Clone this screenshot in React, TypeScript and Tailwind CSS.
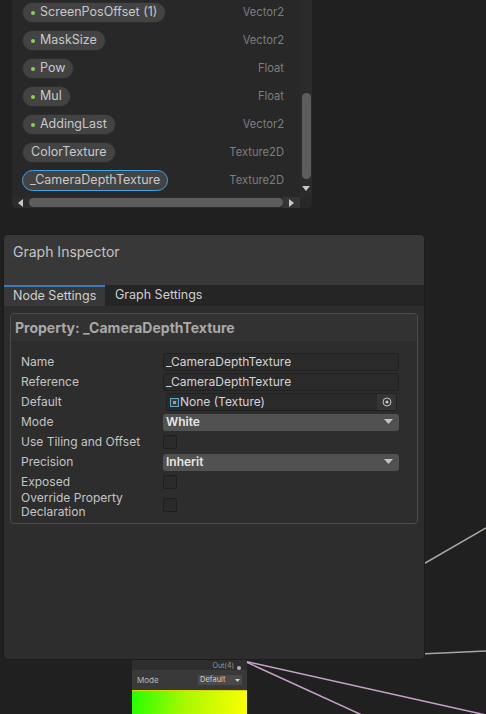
import React from "react";

const props = [
  { name: "ScreenPosOffset (1)", type: "Vector2", dot: true },
  { name: "MaskSize", type: "Vector2", dot: true },
  { name: "Pow", type: "Float", dot: true },
  { name: "Mul", type: "Float", dot: true },
  { name: "AddingLast", type: "Vector2", dot: true },
  { name: "ColorTexture", type: "Texture2D", dot: false },
  { name: "_CameraDepthTexture", type: "Texture2D", dot: false, selected: true },
];

function Caret() {
  return (
    <svg width="9" height="6" viewBox="0 0 9 6" className="shrink-0">
      <path d="M0 0 L9 0 L4.5 5 Z" fill="#c4c4c4" />
    </svg>
  );
}

function TextField({ value }: { value: string }) {
  return (
    <div className="h-[18px] flex-1 flex items-center bg-[#2a2a2a] border border-[#212121] rounded-[3px] pl-[2px] text-[12px] text-[#d4d4d4]">
      {value}
    </div>
  );
}

function Dropdown({ value }: { value: string }) {
  return (
    <div className="h-[17px] flex-1 flex items-center justify-between bg-[#515151] rounded-[3px] pl-[3px] pr-[6px] text-[12px] font-semibold text-[#e6e6e6]">
      <span>{value}</span>
      <Caret />
    </div>
  );
}

function Checkbox() {
  return <div className="w-[14px] h-[14px] bg-[#2a2a2a] border border-[#1e1e1e] rounded-[2px]" />;
}

function Row({ label, children, tall }: { label: React.ReactNode; children: React.ReactNode; tall?: boolean }) {
  return (
    <div className={`flex items-center ${tall ? "h-[26px]" : "h-[20px]"}`}>
      <div className="w-[142px] shrink-0 -mt-[1px] text-[12px] leading-[14px] text-[#c4c4c4]">{label}</div>
      <div className="flex-1 flex items-center">{children}</div>
    </div>
  );
}

export default function App() {
  return (
    <div className="relative w-[486px] h-[714px] overflow-hidden bg-[#202020] font-['Inter','Noto_Sans',sans-serif]">
      {/* wires on the graph canvas */}
      <svg className="absolute inset-0" width="486" height="714" viewBox="0 0 486 714">
        <line x1="420" y1="566" x2="486" y2="528" stroke="#a6a89f" strokeWidth="1.5" />
        <line x1="420" y1="654" x2="486" y2="651" stroke="#a6a89f" strokeWidth="1.5" />
        <line x1="244" y1="661" x2="486" y2="715" stroke="#c9a2c9" strokeWidth="1.5" />
        <line x1="244" y1="661" x2="362" y2="715" stroke="#c9a2c9" strokeWidth="1.5" />
      </svg>

      <div className="relative flex flex-col">
        {/* Blackboard */}
        <div className="ml-[12px] w-[300px] h-[208px] bg-[#282828] rounded-b-[5px] flex flex-col overflow-hidden">
          <div className="flex h-[197px]">
            <div className="flex-1 flex flex-col gap-[7px] pt-[2px] pl-[10px] pr-[16px]">
              {props.map((p) => (
                <div key={p.name} className="flex items-center justify-between h-[21px]">
                  <div
                    className={`h-[21px] flex items-center gap-[5px] rounded-full bg-[#434343] text-[12.5px] text-[#c8c8c8] ${
                      p.selected ? "border-[1.5px] border-[#3fa3e4] px-[7px]" : "border border-[#2e2e2e] px-[8px]"
                    }`}
                  >
                    {p.dot && <span className="w-[4px] h-[4px] rounded-full bg-[#8ad050]" />}
                    <span>{p.name}</span>
                  </div>
                  <span className="text-[11.2px] text-[#7e7e7e]">{p.type}</span>
                </div>
              ))}
            </div>
            {/* vertical scrollbar */}
            <div className="w-[12px] flex flex-col items-center bg-[#2b2b2b]">
              <div className="mt-[93px] w-[9px] h-[86px] rounded-full bg-[#5d5d5d]" />
              <svg width="8" height="5" viewBox="0 0 8 5" className="mt-[7px]">
                <path d="M0 0 L8 0 L4 5 Z" fill="#c8c8c8" />
              </svg>
            </div>
          </div>
          {/* horizontal scrollbar */}
          <div className="flex items-center h-[11px] bg-[#2b2b2b]">
            <div className="w-[17px] flex justify-center">
              <svg width="5" height="8" viewBox="0 0 5 8">
                <path d="M5 0 L5 8 L0 4 Z" fill="#c8c8c8" />
              </svg>
            </div>
            <div className="w-[254px] h-[9px] rounded-full bg-[#5d5d5d]" />
            <div className="w-[17px] h-[11px] flex justify-center items-center bg-[#353535]">
              <svg width="5" height="8" viewBox="0 0 5 8">
                <path d="M0 0 L5 4 L0 8 Z" fill="#c8c8c8" />
              </svg>
            </div>
            <div className="w-[12px] h-[11px] bg-[#282828]" />
          </div>
        </div>

        {/* Graph Inspector */}
        <div className="relative z-10 mt-[26px] ml-[3px] w-[422px] h-[426px] rounded-[5px] bg-[#2d2d2d] flex flex-col overflow-hidden border border-[#1c1c1c]">
          <div className="h-[50px] bg-[#383838] px-[9px] pt-[6px] text-[14px] text-[#c4c4c4]">Graph Inspector</div>
          <div className="h-[21px] flex bg-[#252525] text-[12.5px]">
            <div className="w-[101px] bg-[#383838] border-t-2 border-[#3a79bb] flex items-center pl-[9px] text-[#cfcfcf]">
              Node Settings
            </div>
            <div className="flex items-center pl-[10px] text-[#cfcfcf]">Graph Settings</div>
          </div>

          <div className="mt-[7px] mx-[6px] h-[211px] border border-[#4c4c4c] rounded-[4px] flex flex-col">
            <div className="h-[27px] flex items-center pl-[4px] text-[14px] font-bold text-[#a9a9a9] bg-[#323232] rounded-t-[4px]">
              Property: _CameraDepthTexture
            </div>
            <div className="flex flex-col pt-[11px] pl-[10px] pr-[18px]">
              <Row label="Name">
                <TextField value="_CameraDepthTexture" />
              </Row>
              <Row label="Reference">
                <TextField value="_CameraDepthTexture" />
              </Row>
              <Row label="Default">
                <div className="ml-[3px] mr-[2px] h-[18px] flex-1 flex items-center bg-[#2a2a2a] border border-[#212121] rounded-[2px] text-[12px] text-[#d4d4d4]">
                  <span className="ml-[3px] mr-[1px] w-[9px] h-[9px] border border-[#5fa6c8] bg-[#3a3a3a] flex items-center justify-center">
                    <span className="w-[3px] h-[3px] bg-[#9a9a9a]" />
                  </span>
                  <span className="flex-1">None (Texture)</span>
                  <span className="w-[19px] h-[16px] bg-[#353535] flex items-center justify-center">
                    <svg width="10" height="10" viewBox="0 0 10 10">
                      <circle cx="5" cy="5" r="4" fill="none" stroke="#c4c4c4" strokeWidth="1" />
                      <circle cx="5" cy="5" r="1.6" fill="#c4c4c4" />
                    </svg>
                  </span>
                </div>
              </Row>
              <Row label="Mode">
                <Dropdown value="White" />
              </Row>
              <Row label="Use Tiling and Offset">
                <Checkbox />
              </Row>
              <Row label="Precision">
                <Dropdown value="Inherit" />
              </Row>
              <Row label="Exposed">
                <Checkbox />
              </Row>
              <Row label={<>Override Property<br />Declaration</>} tall>
                <Checkbox />
              </Row>
            </div>
          </div>
        </div>

        {/* Node peeking below the inspector */}
        <div className="ml-[132px] w-[115px] flex flex-col bg-[#2e2e2e]">
          <div className="h-[10px] flex items-end justify-end pr-[6px] text-[7px] leading-[8px] text-[#9a9a9a]">
            Out(4) <span className="ml-[3px] w-[4px] h-[4px] rounded-full bg-[#c9a2c9]" />
          </div>
          <div className="h-[20px] bg-[#393939] flex items-center justify-between px-[5px] text-[8px] text-[#b8b8b8]">
            <span>Mode</span>
            <div className="w-[44px] h-[10px] bg-[#4a4a4a] flex items-center justify-between px-[2px] text-[7.5px] text-[#cfcfcf]">
              <span>Default</span>
              <svg width="5" height="3" viewBox="0 0 5 3">
                <path d="M0 0 L5 0 L2.5 3 Z" fill="#cfcfcf" />
              </svg>
            </div>
          </div>
          <div className="h-[30px] border-t border-[#d8d800] bg-[linear-gradient(100deg,#22ff00_0%,#a8f800_45%,#ffff00_100%)]" />
        </div>
      </div>
    </div>
  );
}
